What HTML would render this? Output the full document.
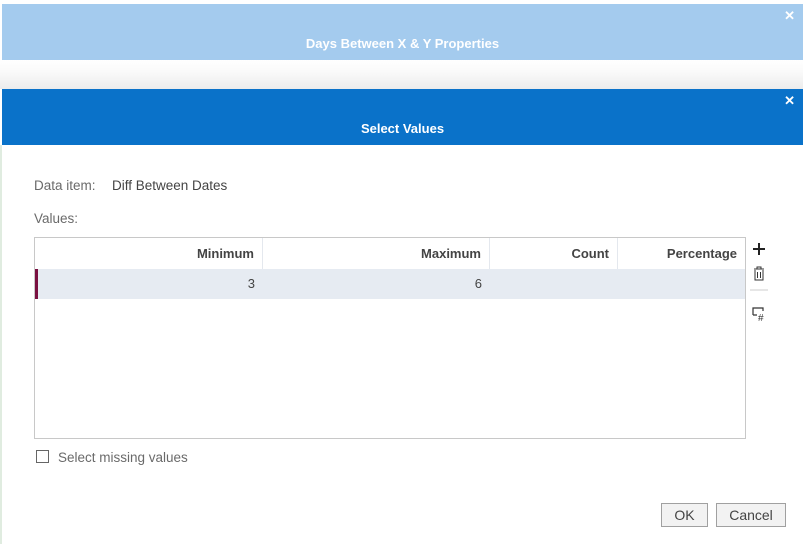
<!DOCTYPE html>
<html><head><meta charset="utf-8"><style>
*{box-sizing:border-box;margin:0;padding:0}
body{width:803px;height:544px;background:#fff;font-family:"Liberation Sans",sans-serif;position:relative;overflow:hidden;color:#4a4a4a}
.top{position:absolute;left:2px;top:4px;width:801px;height:56px;background:#a4cbee;color:#fff;font-weight:bold;font-size:13px;text-align:center;line-height:80px}
.gap{position:absolute;left:0;top:60px;width:803px;height:29px;background:linear-gradient(#fff,#fafafa 40%,#ececec)}
.bar{position:absolute;left:2px;top:89px;width:801px;height:56px;background:#0a72c9;color:#fff;font-weight:bold;font-size:13px;text-align:center;line-height:80px}
.x{position:absolute;right:8px;top:5px;font-size:13px;font-weight:bold;line-height:14px}
.lb{position:absolute;left:0;top:145px;width:2px;height:399px;background:#e0ece0}
.t{position:absolute;font-size:13.5px;color:#6a6a6a}
.tbl{position:absolute;left:34px;top:237px;width:712px;height:202px;border:1px solid #c8c8c8}
.h{position:absolute;top:0;height:31px;line-height:31px;font-weight:bold;font-size:13px;color:#444;text-align:right;padding-right:8px;border-right:1px solid #e4e8ee}
.row{position:absolute;left:0;top:31px;width:710px;height:30px;background:#e6ebf2;border-left:3px solid #7a1040}
.c{position:absolute;top:0;height:30px;line-height:30px;font-size:13px;color:#444;text-align:right;padding-right:8px}
.btn{position:absolute;top:503px;height:24px;border:1px solid #a0a0a0;background:#f2f2f2;font-size:14px;color:#444;text-align:center;line-height:22px}
</style></head><body>
<div class="top">Days Between X &amp; Y Properties<span class="x">✕</span></div>
<div class="gap"></div>
<div class="bar">Select Values<span class="x">✕</span></div>
<div class="lb"></div>
<div class="t" style="left:34px;top:178px">Data item:</div>
<div class="t" style="left:112px;top:178px;color:#444">Diff Between Dates</div>
<div class="t" style="left:34px;top:211px">Values:</div>
<div class="tbl">
<div class="h" style="left:0;width:228px">Minimum</div>
<div class="h" style="left:228px;width:227px">Maximum</div>
<div class="h" style="left:455px;width:128px">Count</div>
<div class="h" style="left:583px;width:127px;border-right:none">Percentage</div>
<div class="row">
<div class="c" style="left:-3px;width:228px">3</div>
<div class="c" style="left:225px;width:227px">6</div>
</div>
</div>
<svg style="position:absolute;left:750px;top:240px" width="20" height="90">
<path d="M9 3v12M3 9h12" stroke="#222" stroke-width="2"/>
<path d="M4 29h10M7 29v-2h4v2M5 30v10h8v-10M7.5 32v6M10.5 32v6" stroke="#333" stroke-width="1" fill="none"/>
<path d="M0 50h18" stroke="#ccc"/>
<path d="M3 75v-7h10v3M3 75h4" stroke="#333" stroke-width="1.2" fill="none"/>
<text x="8" y="81" font-size="10" font-family="Liberation Sans" fill="#333">#</text>
</svg>
<div style="position:absolute;left:36px;top:450px;width:13px;height:13px;border:1px solid #666"></div>
<div class="t" style="left:58px;top:450px">Select missing values</div>
<div class="btn" style="left:661px;width:47px">OK</div>
<div class="btn" style="left:716px;width:70px">Cancel</div>
</body></html>
